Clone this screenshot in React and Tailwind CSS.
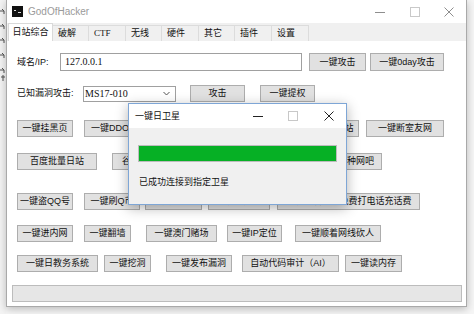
import React from "react";

const FONT = "font-['Liberation_Sans','Noto_Sans_CJK_SC',sans-serif]";
const SERIF = "font-['Liberation_Serif','Noto_Sans_CJK_SC',serif]";

function Btn({ className, children }) {
  return (
    <div
      className={`h-[17px] shrink-0 flex items-center justify-center bg-[#e1e1e1] border border-[#adadad] text-[9px] leading-none text-[#111] whitespace-nowrap overflow-hidden ${className}`}
    >
      {children}
    </div>
  );
}

const rows = [
  {
    mt: "mt-[18px]",
    items: [
      ["ml-[10px] w-[56px]", "一键挂黑页"],
      ["ml-[11px] w-[58px]", "一键DDOS"],
      ["ml-[8px] w-[61px]", "一键日卫星"],
      ["ml-[7px] w-[61px]", "一键黑WiFi"],
      ["ml-[6px] w-[74px]", "一键日政府网站"],
      ["ml-[7px] w-[78px]", "一键断室友网"],
    ],
  },
  {
    mt: "mt-[16px]",
    items: [
      ["ml-[10px] w-[80px]", "百度批量日站"],
      ["ml-[15px] w-[74px]", "谷歌批量日站"],
      ["ml-[8px] w-[92px]", "一键黑入万台肉鸡"],
      ["ml-[8px] w-[88px]", "一键入侵各种网吧"],
    ],
  },
  {
    mt: "mt-[23px]",
    items: [
      ["ml-[10px] w-[56px]", "一键盗QQ号"],
      ["ml-[11px] w-[56px]", "一键刷Q币"],
      ["ml-[5px] w-[57px]", "一键开外挂"],
      ["ml-[6px] w-[62px]", "一键查开房"],
      ["ml-[7px] w-[143px]", "一键入侵电信免费打电话充话费"],
    ],
  },
  {
    mt: "mt-[15px]",
    items: [
      ["ml-[10px] w-[56px]", "一键进内网"],
      ["ml-[11px] w-[47px]", "一键翻墙"],
      ["ml-[15px] w-[71px]", "一键澳门赌场"],
      ["ml-[10px] w-[55px]", "一键IP定位"],
      ["ml-[13px] w-[86px]", "一键顺着网线砍人"],
    ],
  },
  {
    mt: "mt-[13px]",
    items: [
      ["ml-[10px] w-[81px]", "一键日教务系统"],
      ["ml-[6px] w-[47px]", "一键挖洞"],
      ["ml-[15px] w-[66px]", "一键发布漏洞"],
      ["ml-[10px] w-[97px]", "自动代码审计（AI）"],
      ["ml-[6px] w-[57px]", "一键读内存"],
    ],
  },
];

const tabs = [
  ["w-[36px]", "破解"],
  ["w-[37px]", "CTF"],
  ["w-[36px]", "无线"],
  ["w-[37px]", "硬件"],
  ["w-[36px]", "其它"],
  ["w-[37px]", "插件"],
  ["w-[37px]", "设置"],
];

function Controls({ color, maxColor, widths }) {
  return (
    <div className="flex h-full ml-auto">
      <div className={`${widths[0]} flex items-center justify-center`}>
        <svg width="10" height="10" viewBox="0 0 10 10">
          <path d="M0 5.5h10" stroke={color} strokeWidth="1" />
        </svg>
      </div>
      <div className={`${widths[1]} flex items-center justify-center`}>
        <svg width="10" height="10" viewBox="0 0 10 10">
          <rect x="0.5" y="0.5" width="9" height="9" fill="none" stroke={maxColor} strokeWidth="1" />
        </svg>
      </div>
      <div className={`${widths[2]} flex items-center justify-center`}>
        <svg width="10" height="10" viewBox="0 0 10 10">
          <path d="M0.5 0.5l9 9M9.5 0.5l-9 9" stroke={color} strokeWidth="1" />
        </svg>
      </div>
    </div>
  );
}

export default function App() {
  return (
    <div className={`relative w-[474px] h-[314px] overflow-hidden bg-[#f6f6f6] flex ${FONT}`}>
      {/* desktop behind the window */}
      <div className="w-[6px] shrink-0 bg-[#f4f4f4]">
        <svg width="6" height="90" viewBox="0 0 6 90">
          {[11, 26, 40, 55, 70].map((y) => (
            <path key={y} d={`M0 ${y}h4v3M2 ${y - 2}l2 2`} stroke="#555" strokeWidth="1" fill="none" />
          ))}
          <path d="M1 77h4M3 75v6" stroke="#555" strokeWidth="1" />
        </svg>
      </div>

      {/* main window */}
      <div className="w-[461px] h-[307px] shrink-0 flex flex-col bg-white border-x border-b border-[#a9a9a9] shadow-[0_2px_8px_rgba(0,0,0,0.25)]">
        <div className="h-[23px] shrink-0 flex items-center bg-white">
          <div className="ml-[5px] w-[11px] h-[11px] bg-[#111] flex items-center justify-center">
            <svg width="7" height="5" viewBox="0 0 7 5">
              <path d="M0 1.5h2M4 3.5h3" stroke="#ddd" strokeWidth="1" />
            </svg>
          </div>
          <span className="ml-[5px] text-[10px] text-[#9a9a9a]">GodOfHacker</span>
          <Controls color="#8e8e8e" maxColor="#c9c9c9" widths={["w-[34px]", "w-[35px]", "w-[34px]"]} />
        </div>

        <div className="h-[18px] shrink-0 flex items-end bg-[#f0f0f0] text-[9px] leading-none text-[#111]">
          <div className="ml-[1px] w-[45px] h-[18px] bg-white border-x border-t border-[#d9d9d9] flex items-center justify-center">
            日站综合
          </div>
          {tabs.map(([w, t]) => (
            <div
              key={t}
              className={`${w} h-[16px] border-r border-t border-[#dcdcdc] flex items-center pl-[5px] ${t === "CTF" ? SERIF : ""}`}
            >
              {t}
            </div>
          ))}
        </div>

        <div className="flex-1 flex flex-col bg-white text-[9px] leading-none text-[#111]">
          <div className="mt-[12px] h-[18px] flex items-center">
            <span className="ml-[10px] w-[43px]">域名/IP:</span>
            <div className={`w-[242px] h-[18px] border border-[#a0a0a0] flex items-center pl-[4px] text-[10px] ${SERIF}`}>
              127.0.0.1
            </div>
            <Btn className="ml-[7px] w-[57px] h-[18px]">一键攻击</Btn>
            <Btn className="ml-[4px] w-[74px] h-[18px]">一键0day攻击</Btn>
          </div>

          <div className="mt-[14px] h-[17px] flex items-center">
            <span className="ml-[10px] w-[66px]">已知漏洞攻击:</span>
            <div className="w-[93px] h-[16px] border border-[#a0a0a0] flex items-center pl-[1px]">
              <span className={`text-[10px] ${SERIF}`}>MS17-010</span>
              <svg className="ml-auto mr-[5px]" width="7" height="5" viewBox="0 0 7 5">
                <path d="M0.5 1l3 3 3-3" stroke="#555" strokeWidth="1" fill="none" />
              </svg>
            </div>
            <Btn className="ml-[14px] w-[55px]">攻击</Btn>
            <Btn className="ml-[15px] w-[55px]">一键提权</Btn>
          </div>

          {rows.map((r, i) => (
            <div key={i} className={`${r.mt} h-[17px] flex items-center`}>
              {r.items.map(([c, t]) => (
                <Btn key={t} className={c}>
                  {t}
                </Btn>
              ))}
            </div>
          ))}

          <div className="mt-[13px] ml-[5px] w-[450px] h-[17px] bg-[#e6e6e6] border border-[#bcbcbc]" />
        </div>
      </div>

      {/* popup dialog */}
      <div className="absolute left-[128px] top-[103px] w-[219px] h-[102px] flex flex-col border border-[#7ea6d6] bg-[#f0f0f0] shadow-[0_3px_12px_rgba(0,0,0,0.3)]">
        <div className="h-[24px] shrink-0 flex items-center bg-white">
          <span className="ml-[6px] text-[9px] leading-none text-[#111]">一键日卫星</span>
          <Controls color="#222" maxColor="#c8c8c8" widths={["w-[34px]", "w-[36px]", "w-[35px]"]} />
        </div>
        <div className="mt-[17px] ml-[9px] w-[199px] h-[17px] bg-[#06b025] border border-[#bcbcbc]" />
        <div className="mt-[16px] ml-[10px] text-[9px] leading-none text-[#111]">已成功连接到指定卫星</div>
      </div>
    </div>
  );
}
